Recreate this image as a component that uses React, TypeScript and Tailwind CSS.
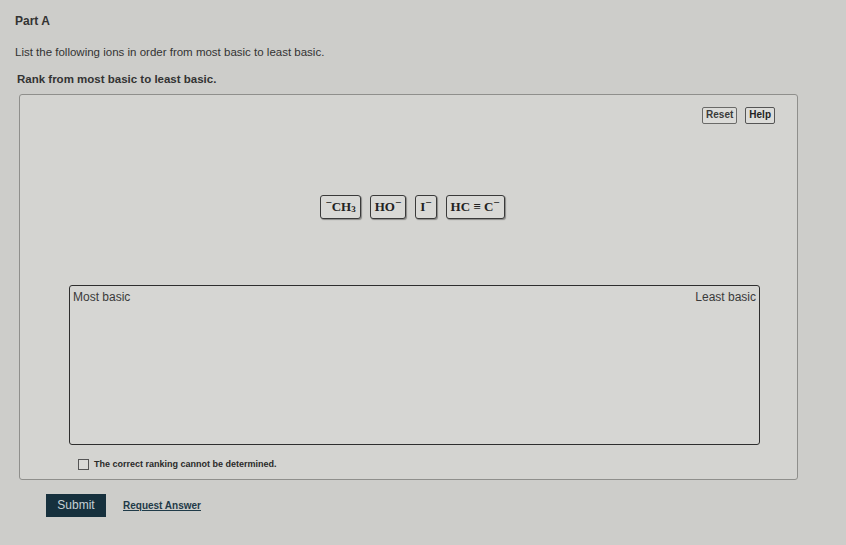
import React from "react";

function Minus() {
  return <span className="relative -top-[4px] text-[11px] leading-none">−</span>;
}

const IONS = [
  { key: "ch3", node: (<><Minus />CH<sub className="text-[9px]">3</sub></>) },
  { key: "ho", node: (<>HO<Minus /></>) },
  { key: "i", node: (<>I<Minus /></>) },
  { key: "hcc", node: (<>HC ≡ C<Minus /></>) },
];

export default function App() {
  return (
    <div
      className="w-[846px] h-[545px] overflow-hidden bg-[#cdcdca] text-[#2b2b2b] relative"
      style={{ fontFamily: '"Liberation Sans", Arial, sans-serif' }}
    >
      <div className="pl-[15px] pt-[12px]">
        <p className="text-[12px] font-bold text-[#333]">Part A</p>
        <p className="mt-[14px] text-[11.5px] text-[#333]">List the following ions in order from most basic to least basic.</p>
        <p className="mt-[10px] ml-[2px] text-[11.5px] font-bold text-[#333]">Rank from most basic to least basic.</p>
      </div>

      <div className="ml-[19px] mt-[5px] w-[779px] h-[386px] rounded-[3px] border border-[#8f8f8c] bg-[#d4d4d1] flex flex-col">
        <div className="flex justify-end gap-[8px] pr-[22px] pt-[12px]">
          <button className="h-[17px] px-[3px] rounded-[2px] border border-[#6a6a68] bg-[#dcdcd9] text-[10px] font-bold text-[#3a3a3a] leading-none">
            Reset
          </button>
          <button className="h-[17px] px-[3px] rounded-[2px] border border-[#555] bg-[#dcdcd9] text-[10px] font-bold text-[#222] leading-none">
            Help
          </button>
        </div>

        <div className="mt-[71px] flex justify-center gap-[9px] pl-[8px]">
          {IONS.map((ion) => (
            <div
              key={ion.key}
              className="h-[24px] px-[4px] rounded-[3px] border-[1.5px] border-[#3a3a3a] bg-[#d9d9d6] shadow-[1px_1px_1px_rgba(0,0,0,0.35)] flex items-center text-[13px] font-bold text-[#222]"
              style={{ fontFamily: '"Liberation Serif", "Times New Roman", serif' }}
            >
              {ion.node}
            </div>
          ))}
        </div>

        <div className="mt-[66px] ml-[49px] w-[691px] h-[160px] rounded-[3px] border-[1.5px] border-[#2e2e2e] bg-[#d6d6d3] flex justify-between px-[3px] pt-[2px]">
          <span className="text-[12px] text-[#3a3a3a]">Most basic</span>
          <span className="text-[12px] text-[#3a3a3a]">Least basic</span>
        </div>

        <label className="mt-[13px] ml-[58px] flex items-center gap-[5px]">
          <span className="w-[11px] h-[11px] border border-[#555] bg-[#dadad7]" />
          <span className="text-[9px] font-bold text-[#2a2a2a]">The correct ranking cannot be determined.</span>
        </label>
      </div>

      <div className="ml-[46px] mt-[14px] flex items-center gap-[17px]">
        <button className="w-[60px] h-[23px] bg-[#16303d] text-[12px] text-[#c6d0d6]">Submit</button>
        <span className="text-[10px] font-bold underline text-[#1f3a48]">Request Answer</span>
      </div>
    </div>
  );
}
